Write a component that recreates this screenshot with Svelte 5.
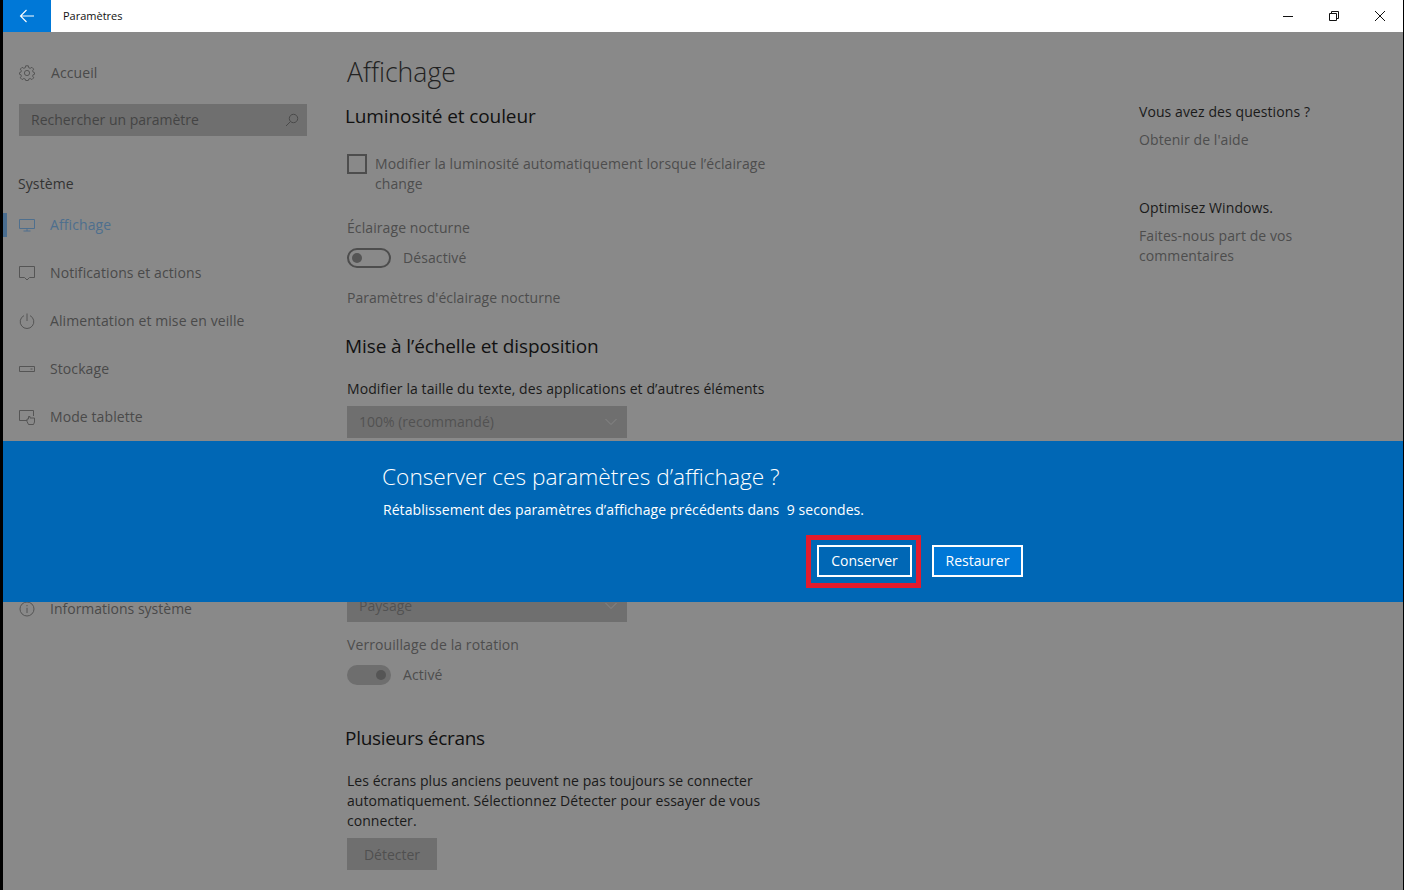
<script>
const navItems = [
  { label: 'Affichage', icon: 'display', active: true },
  { label: 'Notifications et actions', icon: 'note' },
  { label: 'Alimentation et mise en veille', icon: 'power' },
  { label: 'Stockage', icon: 'storage' },
  { label: 'Mode tablette', icon: 'tablet' },
  { label: 'Informations système', icon: 'info', gap: true },
];
</script>

<div class="window">
  <header class="titlebar">
    <button class="back" aria-label="Retour">
      <svg width="16" height="16" viewBox="0 0 16 16" fill="none" stroke="#fff" stroke-width="1.1">
        <path d="M1.5 8H15M7.5 2L1.5 8L7.5 14" />
      </svg>
    </button>
    <span class="app-title">Paramètres</span>
    <div class="controls">
      <svg width="12" height="12" viewBox="0 0 12 12" fill="none" stroke="#111"><path d="M1 6.5H11" /></svg>
      <svg width="12" height="12" viewBox="0 0 12 12" fill="none" stroke="#111"><path d="M1.5 3.5H8.5V10.5H1.5ZM3.5 3.5V1.5H10.5V8.5H8.5" /></svg>
      <svg width="12" height="12" viewBox="0 0 12 12" fill="none" stroke="#111"><path d="M1 1L11 11M11 1L1 11" /></svg>
    </div>
  </header>

  <div class="body">
    <aside class="sidebar">
      <div class="home">
        <svg width="16" height="16" viewBox="0 0 16 16" fill="none" stroke="#555">
          <circle cx="8" cy="8" r="2.6" />
          <path d="M6.7 .8H9.3L9.7 2.7L11.2 3.3L12.9 2.3L14.7 4.1L13.6 5.8L14.2 7.2L15.5 7.7V9.3L14.2 9.6L13.6 11.1L14.7 12.8L12.9 14.6L11.2 13.5L9.7 14.1L9.3 15.5H6.7L6.3 14.1L4.8 13.5L3.1 14.6L1.3 12.8L2.4 11.1L1.8 9.6L.5 9.3V7.7L1.8 7.2L2.4 5.8L1.3 4.1L3.1 2.3L4.8 3.3L6.3 2.7Z" />
        </svg>
        <span>Accueil</span>
      </div>

      <div class="search">
        <span>Rechercher un paramètre</span>
        <svg width="14" height="14" viewBox="0 0 14 14" fill="none" stroke="#4a4a4a">
          <circle cx="8.5" cy="5.5" r="4.2" />
          <path d="M5.5 8.5L1 13" />
        </svg>
      </div>

      <div class="group">Système</div>

      <nav>
        {#each navItems as item}
          <div class="nav-item" class:active={item.active} class:gap={item.gap}>
            <svg width="16" height="16" viewBox="0 0 16 16" fill="none" stroke={item.active ? '#4e6f8e' : '#555'}>
              {#if item.icon === 'display'}
                <path d="M.5 2.5H15.5V11.5H.5ZM8 11.5V14M4.5 14H11.5" />
              {:else if item.icon === 'note'}
                <path d="M.5 1.5H15.5V12.5H10.5L8 15L5.5 12.5H.5Z" />
              {:else if item.icon === 'power'}
                <path d="M8 .5V8M5 2.6A6.8 6.8 0 1 0 11 2.6" />
              {:else if item.icon === 'storage'}
                <path d="M.5 5.5H15.5V10.5H.5ZM11.5 8H13.5" />
              {:else if item.icon === 'tablet'}
                <path d="M8 11.5H.5V1.5H14.5V7M9.5 15.5L8 12.5V10H9.5V7.5H11V9H15.5V13L14.5 15.5Z" />
              {:else}
                <circle cx="8" cy="8" r="7" />
                <path d="M8 4V5.2M8 6.8V12" />
              {/if}
            </svg>
            <span>{item.label}</span>
          </div>
        {/each}
      </nav>
    </aside>

    <main class="content">
      <h1>Affichage</h1>
      <h2 class="first">Luminosité et couleur</h2>

      <div class="check-row">
        <span class="checkbox"></span>
        <span class="dim">Modifier la luminosité automatiquement lorsque l’éclairage<br />change</span>
      </div>

      <div class="dim label night">Éclairage nocturne</div>
      <div class="toggle-row">
        <span class="toggle off"><i></i></span>
        <span class="dim">Désactivé</span>
      </div>
      <div class="dim link">Paramètres d'éclairage nocturne</div>

      <h2 class="scale">Mise à l’échelle et disposition</h2>
      <div class="label size">Modifier la taille du texte, des applications et d’autres éléments</div>
      <div class="select">
        <span>100% (recommandé)</span>
        <svg width="12" height="8" viewBox="0 0 12 8" fill="none" stroke="#868686"><path d="M.5 1L6 6.5L11.5 1" /></svg>
      </div>

      <div class="select orientation">
        <span>Paysage</span>
        <svg width="12" height="8" viewBox="0 0 12 8" fill="none" stroke="#868686"><path d="M.5 1L6 6.5L11.5 1" /></svg>
      </div>
      <div class="dim label lock">Verrouillage de la rotation</div>
      <div class="toggle-row">
        <span class="toggle on"><i></i></span>
        <span class="dim">Activé</span>
      </div>

      <h2 class="screens">Plusieurs écrans</h2>
      <p class="para">
        Les écrans plus anciens peuvent ne pas toujours se connecter<br />
        automatiquement. Sélectionnez Détecter pour essayer de vous<br />
        connecter.
      </p>
      <div class="detect">Détecter</div>
    </main>

    <aside class="help">
      <div class="help-title">Vous avez des questions ?</div>
      <div class="dim help-link">Obtenir de l'aide</div>
      <div class="help-title second">Optimisez Windows.</div>
      <div class="dim help-link">Faites-nous part de vos<br />commentaires</div>
    </aside>

    <section class="dialog">
      <div class="dialog-inner">
        <div class="dialog-title">Conserver ces paramètres d’affichage ?</div>
        <div class="dialog-text">Rétablissement des paramètres d’affichage précédents dans&nbsp; 9 secondes.</div>
        <div class="dialog-actions">
          <button class="keep">Conserver</button>
          <button class="restore">Restaurer</button>
        </div>
      </div>
    </section>
  </div>
</div>

<style>
:global(body) {
  background: #000;
}

.window {
  display: flex;
  flex-direction: column;
  height: 890px;
  padding: 0 1px 0 3px;
  box-sizing: border-box;
  overflow: hidden;
  font-family: "Open Sans", "Noto Sans", sans-serif;
  font-size: 14px;
  line-height: 20px;
  letter-spacing: .09px;
  color: #111;
}

.titlebar {
  display: flex;
  align-items: center;
  flex: 0 0 32px;
  background: #fff;
  letter-spacing: 0;
}

.back {
  display: flex;
  align-items: center;
  justify-content: center;
  width: 48px;
  height: 32px;
  padding: 0;
  border: 0;
  background: #0078d7;
}

.app-title {
  margin-left: 12px;
  font-size: 11px;
  color: #111;
}

.controls {
  display: flex;
  gap: 34px;
  margin-left: auto;
  padding-right: 17px;
}

.body {
  position: relative;
  display: flex;
  flex: 1;
  min-height: 0;
  background: #898989;
}

.sidebar {
  flex: 0 0 344px;
  padding: 31px 0 0 16px;
  box-sizing: border-box;
  color: #4a4a4a;
}

.home {
  display: flex;
  align-items: center;
  gap: 16px;
  height: 20px;
}

.search {
  display: flex;
  align-items: center;
  justify-content: space-between;
  width: 288px;
  height: 32px;
  margin-top: 21px;
  padding: 0 8px 0 12px;
  box-sizing: border-box;
  background: #6f6f6f;
  color: #444;
  letter-spacing: 0;
}

.group {
  margin: 38px 0 0 -1px;
  color: #333;
}

nav {
  margin-top: 7px;
}

.nav-item {
  position: relative;
  display: flex;
  align-items: center;
  gap: 15px;
  height: 48px;
}

.nav-item.gap {
  margin-top: 144px;
  letter-spacing: 0;
}

.nav-item.active {
  color: #4e6f8e;
}

.nav-item.active::before {
  content: '';
  position: absolute;
  left: -16px;
  top: 12px;
  width: 4px;
  height: 24px;
  background: #4a6d8f;
}

.content {
  flex: 0 0 792px;
  padding-top: 20px;
  box-sizing: border-box;
}

h1 {
  margin: 0;
  font-size: 26.6px;
  font-weight: 300;
  line-height: 40px;
  letter-spacing: 0;
  color: #222;
}

h2 {
  margin: 0 0 0 -2px;
  font-size: 19px;
  font-weight: 400;
  line-height: 28px;
  letter-spacing: -.1px;
  color: #111;
}

h2.first {
  margin-top: 10px;
}

.dim {
  color: #4d4d4d;
}

.check-row {
  display: flex;
  gap: 8px;
  margin-top: 24px;
}

.checkbox {
  flex: none;
  width: 20px;
  height: 20px;
  border: 2px solid #4d4d4d;
  box-sizing: border-box;
}

.label.night {
  margin-top: 24px;
}

.toggle-row {
  display: flex;
  align-items: center;
  gap: 12px;
  margin-top: 10px;
}

.toggle {
  display: flex;
  align-items: center;
  width: 44px;
  height: 20px;
  padding: 0 5px;
  border-radius: 10px;
  box-sizing: border-box;
}

.toggle i {
  width: 10px;
  height: 10px;
  border-radius: 50%;
  background: #555;
}

.toggle.off {
  border: 2px solid #4d4d4d;
  padding: 0 3px;
}

.toggle.on {
  justify-content: flex-end;
  background: #6e6e6e;
}

.link {
  margin-top: 20px;
  letter-spacing: .03px;
}

h2.scale {
  margin-top: 24px;
}

.label.size {
  margin-top: 19px;
  color: #1a1a1a;
}

.select {
  display: flex;
  align-items: center;
  justify-content: space-between;
  width: 280px;
  height: 32px;
  margin-top: 7px;
  padding: 0 10px 0 12px;
  box-sizing: border-box;
  background: #6f6f6f;
  color: #525252;
  letter-spacing: 0;
}

.select.orientation {
  margin-top: 152px;
}

.label.lock {
  margin-top: 13px;
}

h2.screens {
  margin-top: 39px;
  letter-spacing: -.3px;
}

.para {
  margin: 19px 0 0;
  letter-spacing: .05px;
  color: #1a1a1a;
}

.detect {
  display: flex;
  align-items: center;
  justify-content: center;
  width: 90px;
  height: 32px;
  margin-top: 7px;
  padding-top: 2px;
  box-sizing: border-box;
  background: #6f6f6f;
  color: #505050;
  letter-spacing: 0;
}

.help {
  padding-top: 70px;
}

.help-title {
  color: #1a1a1a;
}

.help-title.second {
  margin-top: 48px;
}

.help-link {
  margin-top: 8px;
}

.dialog {
  position: absolute;
  left: 0;
  right: 0;
  top: 409px;
  height: 161px;
  background: #0067b5;
  color: #fff;
}

.dialog-inner {
  width: 641px;
  margin-left: 379px;
  padding-top: 20px;
}

.dialog-title {
  font-size: 22.7px;
  font-weight: 300;
  line-height: 32px;
  letter-spacing: 0;
}

.dialog-text {
  margin: 7px 0 0 1px;
  letter-spacing: .06px;
}

.dialog-actions {
  display: flex;
  justify-content: flex-end;
  gap: 20px;
  margin-top: 25px;
}

.dialog-actions button {
  position: relative;
  height: 32px;
  border: 2px solid #fff;
  color: #fff;
  font: inherit;
  letter-spacing: 0;
}

.keep {
  width: 95px;
  background: #0067b5;
}

/* red callout drawn over the screenshot */
.keep::after {
  content: '';
  position: absolute;
  inset: -12px -11px -13px -13px;
  border: 5px solid #e31b2d;
}

.restore {
  width: 91px;
  background: #0078d7;
}
</style>
